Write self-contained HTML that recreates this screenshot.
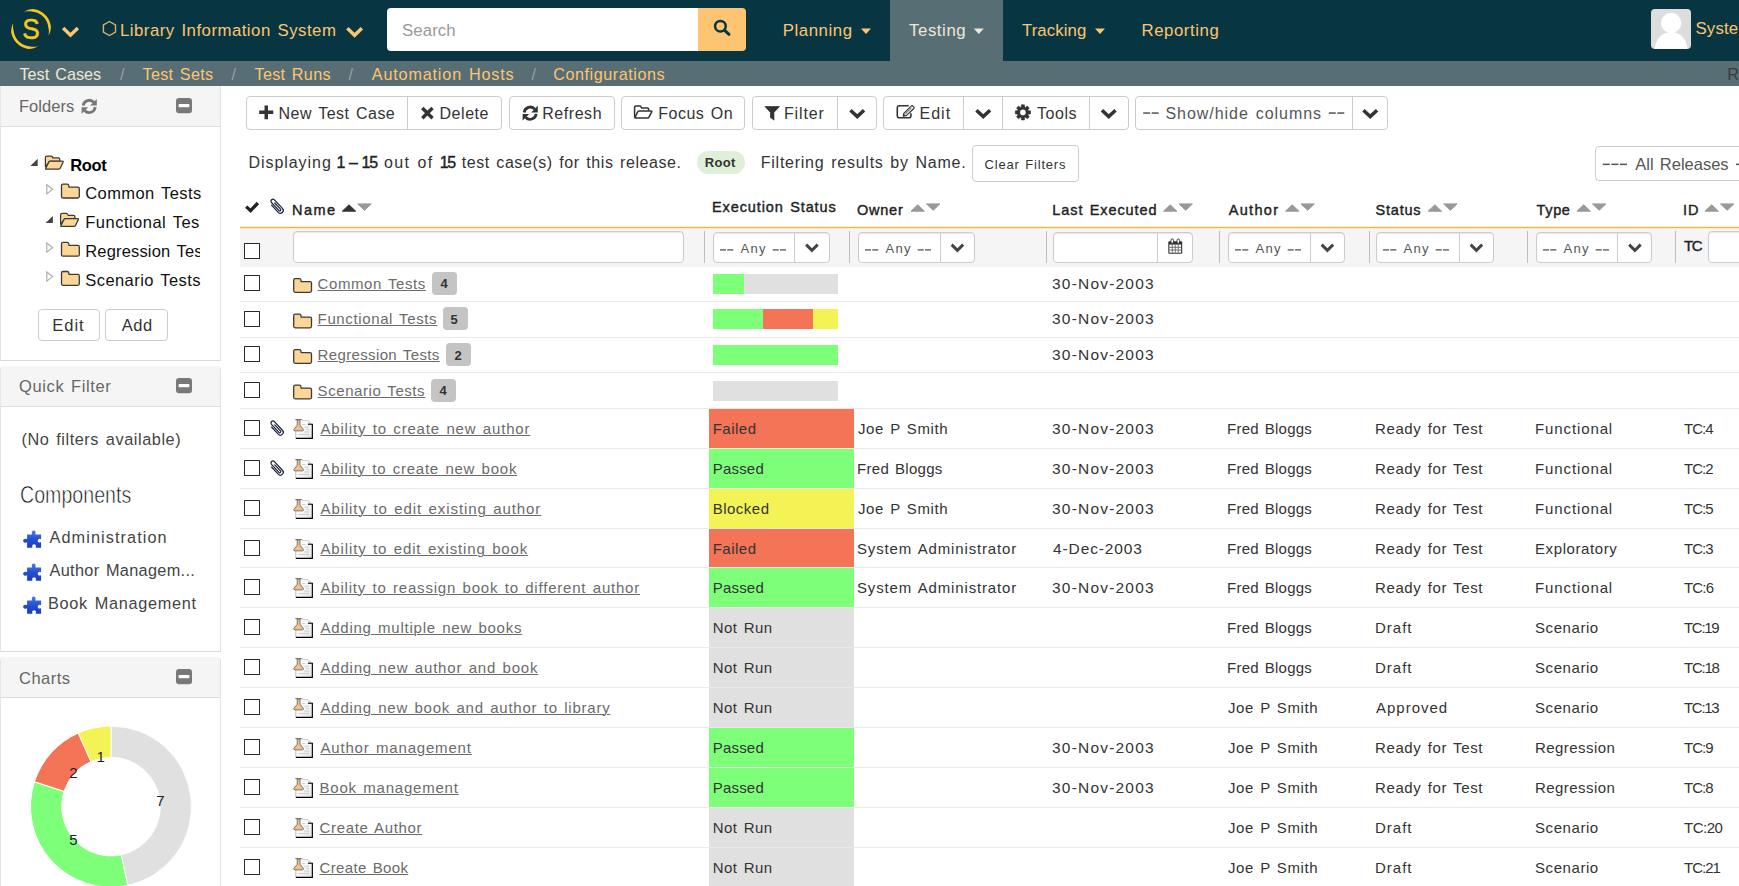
<!DOCTYPE html>
<html><head><meta charset="utf-8"><title>Test Cases</title>
<style>
html,body{margin:0;padding:0;background:#fff;}
body{width:1739px;height:886px;overflow:hidden;position:relative;font-family:"Liberation Sans",sans-serif;}
.t{position:absolute;white-space:pre;font-family:"Liberation Sans",sans-serif;line-height:30px;}
.b{position:absolute;box-sizing:border-box;}
.btn{position:absolute;box-sizing:border-box;border:1px solid #ccc;border-radius:4px;background:#fff;}
.inp{box-shadow:inset 0 1px 1px rgba(0,0,0,.09);}
.sep{position:absolute;width:1px;background:#ccc;}
.hl{position:absolute;left:240px;width:1499px;height:1px;background:#e9e9e9;}
.cb{position:absolute;box-sizing:border-box;width:16px;height:16px;left:244px;border:1px solid #2a2a2a;border-radius:0.5px;background:#fff;}
.vd{position:absolute;width:1px;top:231px;height:32px;background:#bdbdbd;}
svg{position:absolute;overflow:visible;}
</style></head><body>
<div class="b" style="left:0px;top:0px;width:1739px;height:61px;background:#073642;"></div>
<div class="b" style="left:890px;top:0px;width:113px;height:61px;background:#586e75;"></div>
<div class="b" style="left:0px;top:61px;width:1739px;height:25px;background:#586e75;"></div>
<div class="b" style="left:387px;top:8px;width:311px;height:43px;background:#fff;border-radius:4px 0 0 4px;"></div>
<div class="b" style="left:698px;top:8px;width:48px;height:43px;background:#fdc571;border-radius:0 4px 4px 0;"></div>
<div class="b" style="left:1651px;top:9px;width:40px;height:40px;background:#ddd;border-radius:4px;overflow:hidden;"></div>
<div class="b" style="left:0px;top:86px;width:221px;height:275px;background:#fff;border-left:1px solid #e6e6e6;border-right:1px solid #e2e2e2;border-bottom:1px solid #d9d9d9;"></div>
<div class="b" style="left:1px;top:86px;width:219px;height:41px;background:#f5f5f5;border-bottom:1px solid #ddd;"></div>
<div class="b" style="left:0px;top:366px;width:221px;height:286px;background:#fff;border-radius:4px 4px 0 0;border-left:1px solid #e6e6e6;border-right:1px solid #e2e2e2;border-bottom:1px solid #d9d9d9;"></div>
<div class="b" style="left:1px;top:366px;width:219px;height:41px;background:#f5f5f5;border-bottom:1px solid #ddd;border-radius:3px 3px 0 0;"></div>
<div class="b" style="left:0px;top:657px;width:221px;height:240px;background:#fff;border-radius:4px 4px 0 0;border-left:1px solid #e6e6e6;border-right:1px solid #e2e2e2;border-bottom:1px solid #d9d9d9;"></div>
<div class="b" style="left:1px;top:657px;width:219px;height:41px;background:#f5f5f5;border-bottom:1px solid #ddd;border-radius:3px 3px 0 0;"></div>
<div class="btn" style="left:37.5px;top:309px;width:62px;height:32px;"></div>
<div class="btn" style="left:105px;top:309px;width:62.5px;height:32px;"></div>
<div class="btn" style="left:246px;top:96px;width:256px;height:34px;"></div>
<div class="b" style="left:407px;top:97px;width:1px;height:32px;background:#ccc;"></div>
<div class="btn" style="left:509px;top:96px;width:106px;height:34px;"></div>
<div class="btn" style="left:621px;top:96px;width:124px;height:34px;"></div>
<div class="btn" style="left:752px;top:96px;width:125px;height:34px;"></div>
<div class="b" style="left:837px;top:97px;width:1px;height:32px;background:#ccc;"></div>
<div class="btn" style="left:883px;top:96px;width:246px;height:34px;"></div>
<div class="b" style="left:963px;top:97px;width:1px;height:32px;background:#ccc;"></div>
<div class="b" style="left:1002px;top:97px;width:1px;height:32px;background:#ccc;"></div>
<div class="b" style="left:1089px;top:97px;width:1px;height:32px;background:#ccc;"></div>
<div class="btn" style="left:1135px;top:96px;width:253px;height:34px;"></div>
<div class="b" style="left:1352px;top:97px;width:1px;height:32px;background:#ccc;"></div>
<div class="btn" style="left:972px;top:145px;width:107px;height:37px;"></div>
<div class="btn" style="left:1595px;top:146px;width:165px;height:35px;"></div>
<div class="b" style="left:697px;top:151px;width:48px;height:23px;background:#dff0d8;border-radius:12px;"></div>
<div class="b" style="left:240px;top:228px;width:1499px;height:39px;background:#f5f5f5;"></div>
<div class="cb" style="left:244px;top:243px;width:16px;height:16px;"></div>
<div class="btn inp" style="left:293px;top:231px;width:391px;height:32px;"></div>
<div class="vd" style="left:704px"></div>
<div class="vd" style="left:849px"></div>
<div class="vd" style="left:1045.5px"></div>
<div class="vd" style="left:1219px"></div>
<div class="vd" style="left:1368.5px"></div>
<div class="vd" style="left:1527px"></div>
<div class="vd" style="left:1675px"></div>
<div class="btn inp" style="left:713px;top:232px;width:116.5px;height:31px;"></div>
<div class="b" style="left:794px;top:233px;width:1px;height:29px;background:#ccc;"></div>
<div class="btn inp" style="left:858px;top:232px;width:116.5px;height:31px;"></div>
<div class="b" style="left:939.5px;top:233px;width:1px;height:29px;background:#ccc;"></div>
<div class="btn inp" style="left:1228px;top:232px;width:116.5px;height:31px;"></div>
<div class="b" style="left:1309.5px;top:233px;width:1px;height:29px;background:#ccc;"></div>
<div class="btn inp" style="left:1376px;top:232px;width:117.5px;height:31px;"></div>
<div class="b" style="left:1458.5px;top:233px;width:1px;height:29px;background:#ccc;"></div>
<div class="btn inp" style="left:1536px;top:232px;width:116px;height:31px;"></div>
<div class="b" style="left:1617px;top:233px;width:1px;height:29px;background:#ccc;"></div>
<div class="btn inp" style="left:1053px;top:232px;width:139.5px;height:31px;"></div>
<div class="b" style="left:1157px;top:233px;width:1px;height:29px;background:#ccc;"></div>
<div class="btn inp" style="left:1708px;top:231px;width:60px;height:32px;"></div>
<div class="hl" style="top:301px"></div>
<div class="hl" style="top:337px"></div>
<div class="hl" style="top:372px"></div>
<div class="hl" style="top:408px"></div>
<div class="cb" style="left:244px;top:275px;width:16px;height:16px;"></div>
<div class="b" style="left:432px;top:272px;width:25px;height:22.5px;background:#c4c4c4;border-radius:4px;"></div>
<div class="b" style="left:713px;top:274px;width:31px;height:20px;background:#7eff7a;"></div>
<div class="b" style="left:744px;top:274px;width:94px;height:20px;background:#e0e0e0;"></div>
<div class="cb" style="left:244px;top:311px;width:16px;height:16px;"></div>
<div class="b" style="left:443px;top:307px;width:25px;height:22.5px;background:#c4c4c4;border-radius:4px;"></div>
<div class="b" style="left:713px;top:309px;width:50px;height:20px;background:#7eff7a;"></div>
<div class="b" style="left:763px;top:309px;width:50px;height:20px;background:#f47457;"></div>
<div class="b" style="left:813px;top:309px;width:25px;height:20px;background:#f4f356;"></div>
<div class="cb" style="left:244px;top:346px;width:16px;height:16px;"></div>
<div class="b" style="left:446px;top:343px;width:25px;height:22.5px;background:#c4c4c4;border-radius:4px;"></div>
<div class="b" style="left:713px;top:345px;width:125px;height:20px;background:#7eff7a;"></div>
<div class="cb" style="left:244px;top:382px;width:16px;height:16px;"></div>
<div class="b" style="left:431px;top:379px;width:25px;height:22.5px;background:#c4c4c4;border-radius:4px;"></div>
<div class="b" style="left:713px;top:381px;width:125px;height:20px;background:#e0e0e0;"></div>
<div class="cb" style="left:244px;top:420px;width:16px;height:16px;"></div>
<div class="b" style="left:709px;top:409px;width:145px;height:39px;background:#f47457;"></div>
<div class="hl" style="top:448px"></div>
<div class="cb" style="left:244px;top:460px;width:16px;height:16px;"></div>
<div class="b" style="left:709px;top:449px;width:145px;height:39px;background:#7eff7a;"></div>
<div class="hl" style="top:488px"></div>
<div class="cb" style="left:244px;top:500px;width:16px;height:16px;"></div>
<div class="b" style="left:709px;top:489px;width:145px;height:39px;background:#f4f356;"></div>
<div class="hl" style="top:528px"></div>
<div class="cb" style="left:244px;top:540px;width:16px;height:16px;"></div>
<div class="b" style="left:709px;top:529px;width:145px;height:38px;background:#f47457;"></div>
<div class="hl" style="top:567px"></div>
<div class="cb" style="left:244px;top:579px;width:16px;height:16px;"></div>
<div class="b" style="left:709px;top:568px;width:145px;height:39px;background:#7eff7a;"></div>
<div class="hl" style="top:607px"></div>
<div class="cb" style="left:244px;top:619px;width:16px;height:16px;"></div>
<div class="b" style="left:709px;top:608px;width:145px;height:39px;background:#e0e0e0;"></div>
<div class="hl" style="top:647px"></div>
<div class="cb" style="left:244px;top:659px;width:16px;height:16px;"></div>
<div class="b" style="left:709px;top:648px;width:145px;height:39px;background:#e0e0e0;"></div>
<div class="hl" style="top:687px"></div>
<div class="cb" style="left:244px;top:699px;width:16px;height:16px;"></div>
<div class="b" style="left:709px;top:688px;width:145px;height:39px;background:#e0e0e0;"></div>
<div class="hl" style="top:727px"></div>
<div class="cb" style="left:244px;top:739px;width:16px;height:16px;"></div>
<div class="b" style="left:709px;top:728px;width:145px;height:39px;background:#7eff7a;"></div>
<div class="hl" style="top:767px"></div>
<div class="cb" style="left:244px;top:779px;width:16px;height:16px;"></div>
<div class="b" style="left:709px;top:768px;width:145px;height:39px;background:#7eff7a;"></div>
<div class="hl" style="top:807px"></div>
<div class="cb" style="left:244px;top:819px;width:16px;height:16px;"></div>
<div class="b" style="left:709px;top:808px;width:145px;height:39px;background:#e0e0e0;"></div>
<div class="hl" style="top:847px"></div>
<div class="cb" style="left:244px;top:859px;width:16px;height:16px;"></div>
<div class="b" style="left:709px;top:848px;width:145px;height:39px;background:#e0e0e0;"></div>
<svg width="1739" height="886" style="left:0;top:0"><path d="M24.57,11.33 L25.20,11.00 L25.85,10.69 L26.52,10.41 L27.20,10.16 L27.89,9.93 L28.60,9.72 L29.31,9.54 L30.04,9.39 L30.78,9.26 L31.52,9.16 L32.27,9.09 L33.03,9.05 L33.77,9.14 L34.52,9.26 L35.25,9.41 L35.99,9.58 L36.71,9.78 L37.43,10.01 L38.14,10.26 L38.83,10.54 L39.52,10.85 L40.20,11.18 L40.86,11.54 L41.51,11.92 L42.14,12.33 L42.76,12.76 L43.36,13.21 L43.94,13.69 L44.51,14.18 L45.05,14.70 L45.58,15.24 L46.09,15.79 L46.57,16.37 L47.03,16.96 L47.47,17.57 L47.89,18.20 L48.28,18.84 L48.65,19.49 L49.00,20.16 L49.32,20.84 L49.61,21.54 L49.88,22.24 L50.12,22.95 L50.33,23.68 L50.52,24.40 L50.67,25.14 L50.81,25.88 L50.91,26.63 L50.88,27.38 L50.83,28.13 L50.74,28.88 L50.63,29.62 L50.49,30.35 L50.32,31.06 L50.13,31.77 L49.91,32.47 L49.66,33.15 L49.39,33.83 L49.10,34.48 L48.78,35.12 L48.58,35.05 L48.69,34.36 L48.78,33.67 L48.84,32.97 L48.88,32.28 L48.89,31.59 L48.87,30.91 L48.82,30.23 L48.75,29.56 L48.66,28.89 L48.54,28.23 L48.39,27.59 L48.23,26.95 L48.14,26.30 L48.03,25.66 L47.89,25.02 L47.73,24.39 L47.54,23.77 L47.33,23.15 L47.10,22.54 L46.85,21.94 L46.57,21.35 L46.28,20.77 L45.96,20.21 L45.62,19.65 L45.26,19.11 L44.87,18.58 L44.47,18.07 L44.05,17.57 L43.62,17.09 L43.16,16.63 L42.69,16.18 L42.20,15.75 L41.69,15.34 L41.17,14.95 L40.64,14.57 L40.09,14.22 L39.53,13.89 L38.96,13.58 L38.37,13.29 L37.78,13.03 L37.18,12.79 L36.56,12.57 L35.94,12.37 L35.31,12.20 L34.68,12.05 L34.04,11.92 L33.40,11.82 L32.75,11.74 L32.11,11.58 L31.46,11.45 L30.80,11.34 L30.13,11.26 L29.46,11.20 L28.78,11.17 L28.09,11.16 L27.41,11.18 L26.72,11.23 L26.03,11.30 L25.33,11.40 L24.64,11.53Z" fill="#f9c81f"/>
<path d="M37.43,46.67 L36.81,47.00 L36.17,47.30 L35.51,47.57 L34.84,47.83 L34.16,48.06 L33.47,48.26 L32.76,48.44 L32.05,48.60 L31.33,48.72 L30.60,48.82 L29.86,48.90 L29.11,48.94 L28.38,48.88 L27.64,48.77 L26.92,48.63 L26.19,48.47 L25.48,48.27 L24.77,48.06 L24.07,47.81 L23.38,47.55 L22.70,47.25 L22.03,46.93 L21.38,46.59 L20.73,46.22 L20.10,45.83 L19.49,45.42 L18.89,44.98 L18.31,44.52 L17.75,44.04 L17.20,43.54 L16.67,43.02 L16.16,42.49 L15.67,41.93 L15.21,41.35 L14.76,40.76 L14.34,40.15 L13.94,39.53 L13.56,38.89 L13.21,38.24 L12.88,37.58 L12.57,36.90 L12.29,36.22 L12.04,35.52 L11.81,34.82 L11.61,34.10 L11.44,33.39 L11.29,32.66 L11.18,31.93 L11.19,31.18 L11.22,30.44 L11.29,29.71 L11.38,28.98 L11.49,28.26 L11.63,27.54 L11.80,26.84 L12.00,26.15 L12.22,25.47 L12.46,24.80 L12.72,24.14 L13.01,23.50 L13.22,23.56 L13.13,24.25 L13.07,24.94 L13.03,25.62 L13.02,26.30 L13.03,26.98 L13.07,27.65 L13.14,28.32 L13.22,28.98 L13.34,29.63 L13.47,30.28 L13.64,30.91 L13.82,31.54 L13.94,32.17 L14.07,32.79 L14.22,33.42 L14.40,34.03 L14.59,34.64 L14.81,35.25 L15.05,35.84 L15.32,36.42 L15.60,37.00 L15.91,37.56 L16.24,38.11 L16.58,38.65 L16.95,39.18 L17.33,39.69 L17.74,40.19 L18.16,40.67 L18.60,41.14 L19.06,41.59 L19.53,42.02 L20.02,42.43 L20.52,42.83 L21.04,43.21 L21.57,43.56 L22.12,43.90 L22.67,44.22 L23.24,44.52 L23.82,44.79 L24.41,45.05 L25.00,45.28 L25.61,45.49 L26.22,45.68 L26.84,45.84 L27.47,45.99 L28.10,46.11 L28.73,46.20 L29.37,46.29 L30.00,46.44 L30.64,46.57 L31.29,46.67 L31.95,46.75 L32.62,46.80 L33.28,46.83 L33.96,46.84 L34.64,46.82 L35.32,46.77 L36.00,46.70 L36.68,46.60 L37.36,46.47Z" fill="#f9c81f"/>
<text x="31.1" y="39.2" text-anchor="middle" font-family="Liberation Sans" font-size="29.5" fill="#f9c81f" stroke="#f9c81f" stroke-width="0.45" textLength="17.5" lengthAdjust="spacingAndGlyphs">S</text>
<polyline points="63.14,27.94 70.50,35.13 77.86,27.94" fill="none" stroke="#fdc571" stroke-width="3.5" stroke-linejoin="miter"/>
<polyline points="347.34,28.34 354.60,35.33 361.86,28.34" fill="none" stroke="#fdc571" stroke-width="3.5" stroke-linejoin="miter"/>
<polygon points="109.45,21.50 115.51,25.00 115.51,32.00 109.45,35.50 103.39,32.00 103.39,25.00" fill="none" stroke="#d9ae68" stroke-width="1.4"/>
<circle cx="720.4" cy="26.2" r="5.3" fill="none" stroke="#073642" stroke-width="2.5"/><line x1="724.4" y1="30.2" x2="729" y2="34.3" stroke="#073642" stroke-width="3" stroke-linecap="round"/>
<polygon points="861,28.5 871,28.5 866.0,34.0" fill="#fdc571"/>
<polygon points="973.75,28.5 983.75,28.5 978.75,34.0" fill="#eee8d5"/>
<polygon points="1095,28.5 1105,28.5 1100.0,34.0" fill="#fdc571"/>
<g transform="translate(1651,9)"><clipPath id="av"><rect width="40" height="40" rx="4"/></clipPath><g clip-path="url(#av)"><circle cx="20.1" cy="13.9" r="10.2" fill="#fff"/><ellipse cx="20.1" cy="40.4" rx="16.3" ry="17.4" fill="#fff"/></g></g>
<g transform="translate(81.2,98.4) scale(1.0)" stroke="#777" fill="#777"><path d="M2,7.3 A6.1,6.1 0 0 1 12.6,3.9" fill="none" stroke-width="2.8"/><polygon points="15.6,0.6 15.6,7.2 9,7.2" stroke="none"/><path d="M14,8.7 A6.1,6.1 0 0 1 3.4,12.1" fill="none" stroke-width="2.8"/><polygon points="0.4,15.4 0.4,8.8 7,8.8" stroke="none"/></g>
<g transform="translate(522.2,105.2) scale(1.0)" stroke="#333" fill="#333"><path d="M2,7.3 A6.1,6.1 0 0 1 12.6,3.9" fill="none" stroke-width="2.8"/><polygon points="15.6,0.6 15.6,7.2 9,7.2" stroke="none"/><path d="M14,8.7 A6.1,6.1 0 0 1 3.4,12.1" fill="none" stroke-width="2.8"/><polygon points="0.4,15.4 0.4,8.8 7,8.8" stroke="none"/></g>
<rect x="176" y="98" width="16" height="15.3" rx="3" fill="#797979"/><rect x="178.6" y="104.1" width="10.8" height="3.2" rx="0.7" fill="#fff"/>
<rect x="176" y="378" width="16" height="15.3" rx="3" fill="#797979"/><rect x="178.6" y="384.1" width="10.8" height="3.2" rx="0.7" fill="#fff"/>
<rect x="176" y="669" width="16" height="15.3" rx="3" fill="#797979"/><rect x="178.6" y="675.1" width="10.8" height="3.2" rx="0.7" fill="#fff"/>
<path d="M264.5,105.4h3.5v5.2h5.3v3.5h-5.3v5.2h-3.5v-5.2h-5.3v-3.5h5.3z" fill="#333"/>
<g stroke="#333" stroke-width="3.4"><line x1="422.3" y1="108" x2="432.5" y2="118.2"/><line x1="432.5" y1="108" x2="422.3" y2="118.2"/></g>
<g transform="translate(633.6,105) scale(1.0)" stroke="#333"><path d="M1,12.2 V2.2 Q1,1 2.2,1 H6.2 Q7.2,1 7.6,2 L8,2.9 H13.8 Q15,2.9 15,4.1 V5.8" fill="none" stroke-width="1.5"/><path d="M1.2,12.6 L4.3,6.6 Q4.7,5.9 5.6,5.9 H17.6 Q18.6,5.9 18.1,6.8 L15.4,12.1 Q15,13 14,13 H2 Q1,13 1.2,12.6 Z" fill="none" stroke-width="1.5" stroke-linejoin="round"/></g>
<path d="M765,106.6h14.4l-5.5,5.9v7.6l-3.4,-2.6v-5z" fill="#333" stroke="#333" stroke-width="0.8" stroke-linejoin="round"/>
<g transform="translate(896.5,105.2)" stroke="#333" fill="none"><path d="M14.4,8.6 V10.6 Q14.4,12.6 12.4,12.6 H2.8 Q0.8,12.6 0.8,10.6 V2.6 Q0.8,0.6 2.8,0.6 H11.6" stroke-width="1.6" stroke-linecap="round"/><path d="M6.7,10.9 L7.3,8.1 L14.9,0.7 Q15.6,0.1 16.3,0.8 L17.4,1.9 Q18,2.6 17.4,3.3 L9.8,10.4 Z" fill="#fff" stroke-width="1.15" stroke-linejoin="round"/><path d="M6.7,10.9 L7.2,8.6 L9.2,10.4 Z" fill="#333" stroke="none"/><line x1="8.6" y1="8.9" x2="15" y2="2.8" stroke-width="0.9"/></g>
<polygon points="1030.45,110.87 1030.45,113.93 1028.25,114.05 1027.85,115.01 1029.32,116.65 1027.15,118.82 1025.51,117.35 1024.55,117.75 1024.43,119.95 1021.37,119.95 1021.25,117.75 1020.29,117.35 1018.65,118.82 1016.48,116.65 1017.95,115.01 1017.55,114.05 1015.35,113.93 1015.35,110.87 1017.55,110.75 1017.95,109.79 1016.48,108.15 1018.65,105.98 1020.29,107.45 1021.25,107.05 1021.37,104.85 1024.43,104.85 1024.55,107.05 1025.51,107.45 1027.15,105.98 1029.32,108.15 1027.85,109.79 1028.25,110.75" fill="#333" stroke="#333" stroke-width="0.6" stroke-linejoin="round"/><circle cx="1022.9" cy="112.4" r="2.8" fill="#fff"/>
<polyline points="850.44,110.24 857.25,116.63 864.06,110.24" fill="none" stroke="#333" stroke-width="3.5" stroke-linejoin="miter"/>
<polyline points="976.44,110.24 983.25,116.63 990.06,110.24" fill="none" stroke="#333" stroke-width="3.5" stroke-linejoin="miter"/>
<polyline points="1101.94,110.24 1108.75,116.63 1115.56,110.24" fill="none" stroke="#333" stroke-width="3.5" stroke-linejoin="miter"/>
<polyline points="1363.44,110.24 1370.25,116.63 1377.06,110.24" fill="none" stroke="#333" stroke-width="3.5" stroke-linejoin="miter"/>
<polygon points="37.7,158.8 37.7,166.0 30.3,166.0" fill="#444"/>
<path d="M45.400000000000006,166.8 V157.5 Q45.400000000000006,156.0 46.900000000000006,156.0 H50.900000000000006 Q51.900000000000006,156.0 52.400000000000006,156.9 L52.900000000000006,157.9 H58.300000000000004 Q59.7,157.9 59.7,159.3 V161.3 H49.7 Z" fill="#fdd595" stroke="#3a3a3a" stroke-width="1.25" stroke-linejoin="round"/><path d="M45.6,168.5 L48.900000000000006,161.9 Q49.300000000000004,161.20000000000002 50.1,161.20000000000002 H62.5 Q63.6,161.20000000000002 63.1,162.20000000000002 L60.300000000000004,168.0 Q59.900000000000006,169.0 58.900000000000006,169.0 H46.300000000000004 Q45.300000000000004,169.0 45.6,168.5 Z" fill="#fdd595" stroke="#3a3a3a" stroke-width="1.25" stroke-linejoin="round"/>
<polygon points="46.800000000000004,184.70000000000002 52.6,189.3 46.800000000000004,193.9" fill="#fff" stroke="#aaa" stroke-width="1.1" stroke-linejoin="miter"/>
<path d="M61.5,185.7 Q61.5,184.2 63.0,184.2 H67.39999999999999 Q68.5,184.2 68.7,185.3 L69.0,187.1 H77.8 Q79.3,187.1 79.3,188.6 V196.5 Q79.3,198.0 77.8,198.0 H63.0 Q61.5,198.0 61.5,196.5 Z" fill="#fdd595" stroke="#3a3a3a" stroke-width="1.3" stroke-linejoin="round"/>
<polygon points="52.9,215.9 52.9,223.1 45.5,223.1" fill="#444"/>
<path d="M60.6,224.2 V214.89999999999998 Q60.6,213.39999999999998 62.1,213.39999999999998 H66.1 Q67.1,213.39999999999998 67.6,214.29999999999998 L68.1,215.29999999999998 H73.5 Q74.9,215.29999999999998 74.9,216.7 V218.7 H64.9 Z" fill="#fdd595" stroke="#3a3a3a" stroke-width="1.25" stroke-linejoin="round"/><path d="M60.8,225.89999999999998 L64.1,219.29999999999998 Q64.5,218.6 65.3,218.6 H77.7 Q78.8,218.6 78.3,219.6 L75.5,225.39999999999998 Q75.1,226.39999999999998 74.1,226.39999999999998 H61.5 Q60.5,226.39999999999998 60.8,225.89999999999998 Z" fill="#fdd595" stroke="#3a3a3a" stroke-width="1.25" stroke-linejoin="round"/>
<polygon points="46.800000000000004,242.9 52.6,247.5 46.800000000000004,252.1" fill="#fff" stroke="#aaa" stroke-width="1.1" stroke-linejoin="miter"/>
<path d="M61.5,243.89999999999998 Q61.5,242.39999999999998 63.0,242.39999999999998 H67.39999999999999 Q68.5,242.39999999999998 68.7,243.5 L69.0,245.29999999999998 H77.8 Q79.3,245.29999999999998 79.3,246.79999999999998 V254.7 Q79.3,256.2 77.8,256.2 H63.0 Q61.5,256.2 61.5,254.7 Z" fill="#fdd595" stroke="#3a3a3a" stroke-width="1.3" stroke-linejoin="round"/>
<polygon points="46.800000000000004,272.0 52.6,276.59999999999997 46.800000000000004,281.2" fill="#fff" stroke="#aaa" stroke-width="1.1" stroke-linejoin="miter"/>
<path d="M61.5,273.0 Q61.5,271.5 63.0,271.5 H67.39999999999999 Q68.5,271.5 68.7,272.6 L69.0,274.40000000000003 H77.8 Q79.3,274.40000000000003 79.3,275.90000000000003 V283.8 Q79.3,285.3 77.8,285.3 H63.0 Q61.5,285.3 61.5,283.8 Z" fill="#fdd595" stroke="#3a3a3a" stroke-width="1.3" stroke-linejoin="round"/>
<path d="M293.7,280.2 Q293.7,278.7 295.2,278.7 H299.6 Q300.7,278.7 300.9,279.8 L301.2,281.6 H310.0 Q311.5,281.6 311.5,283.1 V290.8 Q311.5,292.3 310.0,292.3 H295.2 Q293.7,292.3 293.7,290.8 Z" fill="#fdd595" stroke="#3a3a3a" stroke-width="1.3" stroke-linejoin="round"/>
<path d="M293.7,315.7 Q293.7,314.2 295.2,314.2 H299.6 Q300.7,314.2 300.9,315.3 L301.2,317.1 H310.0 Q311.5,317.1 311.5,318.6 V326.3 Q311.5,327.8 310.0,327.8 H295.2 Q293.7,327.8 293.7,326.3 Z" fill="#fdd595" stroke="#3a3a3a" stroke-width="1.3" stroke-linejoin="round"/>
<path d="M293.7,351.2 Q293.7,349.7 295.2,349.7 H299.6 Q300.7,349.7 300.9,350.8 L301.2,352.6 H310.0 Q311.5,352.6 311.5,354.1 V361.8 Q311.5,363.3 310.0,363.3 H295.2 Q293.7,363.3 293.7,361.8 Z" fill="#fdd595" stroke="#3a3a3a" stroke-width="1.3" stroke-linejoin="round"/>
<path d="M293.7,386.7 Q293.7,385.2 295.2,385.2 H299.6 Q300.7,385.2 300.9,386.3 L301.2,388.1 H310.0 Q311.5,388.1 311.5,389.6 V397.3 Q311.5,398.8 310.0,398.8 H295.2 Q293.7,398.8 293.7,397.3 Z" fill="#fdd595" stroke="#3a3a3a" stroke-width="1.3" stroke-linejoin="round"/>
<polyline points="246.2,206.6 250.6,210.6 257.9,203" fill="none" stroke="#222" stroke-width="3.3"/>
<g transform="translate(270,199.4) scale(1)" ><g transform="rotate(-43 6.8 7.2)"><path d="M3.9,2.6 V12.4 A2.9,2.9 0 0 0 9.7,12.4 V0.6 A2,2 0 0 0 5.7,0.6 V11.6 A1.05,1.05 0 0 0 7.8,11.6 V3.2" fill="none" stroke="#1a2038" stroke-width="1.2" stroke-linecap="round"/></g></g>
<polygon points="342.3,211.20000000000002 349.0,204.8 355.7,211.20000000000002" fill="#333" stroke="#333" stroke-width="1" stroke-linejoin="round"/>
<polygon points="357.8,203.9 371.2,203.9 364.5,210.3" fill="#999" stroke="#999" stroke-width="1" stroke-linejoin="round"/>
<polygon points="911.0,211.20000000000002 917.7,204.8 924.4,211.20000000000002" fill="#999" stroke="#999" stroke-width="1" stroke-linejoin="round"/>
<polygon points="926.5,203.9 939.9,203.9 933.2,210.3" fill="#999" stroke="#999" stroke-width="1" stroke-linejoin="round"/>
<polygon points="1163.5,211.20000000000002 1170.2,204.8 1176.9,211.20000000000002" fill="#999" stroke="#999" stroke-width="1" stroke-linejoin="round"/>
<polygon points="1179,203.9 1192.4,203.9 1185.7,210.3" fill="#999" stroke="#999" stroke-width="1" stroke-linejoin="round"/>
<polygon points="1285.5,211.20000000000002 1292.2,204.8 1298.9,211.20000000000002" fill="#999" stroke="#999" stroke-width="1" stroke-linejoin="round"/>
<polygon points="1301,203.9 1314.4,203.9 1307.7,210.3" fill="#999" stroke="#999" stroke-width="1" stroke-linejoin="round"/>
<polygon points="1428.2,211.20000000000002 1434.9,204.8 1441.6000000000001,211.20000000000002" fill="#999" stroke="#999" stroke-width="1" stroke-linejoin="round"/>
<polygon points="1443.7,203.9 1457.1000000000001,203.9 1450.4,210.3" fill="#999" stroke="#999" stroke-width="1" stroke-linejoin="round"/>
<polygon points="1577.0,211.20000000000002 1583.7,204.8 1590.4,211.20000000000002" fill="#999" stroke="#999" stroke-width="1" stroke-linejoin="round"/>
<polygon points="1592.5,203.9 1605.9,203.9 1599.2,210.3" fill="#999" stroke="#999" stroke-width="1" stroke-linejoin="round"/>
<polygon points="1705.0,211.20000000000002 1711.7,204.8 1718.4,211.20000000000002" fill="#999" stroke="#999" stroke-width="1" stroke-linejoin="round"/>
<polygon points="1720.5,203.9 1733.9,203.9 1727.2,210.3" fill="#999" stroke="#999" stroke-width="1" stroke-linejoin="round"/>
<polyline points="806.13,244.63 811.90,250.35 817.67,244.63" fill="none" stroke="#444" stroke-width="2.9" stroke-linejoin="miter"/>
<polyline points="951.63,244.63 957.40,250.35 963.17,244.63" fill="none" stroke="#444" stroke-width="2.9" stroke-linejoin="miter"/>
<polyline points="1321.63,244.63 1327.40,250.35 1333.17,244.63" fill="none" stroke="#444" stroke-width="2.9" stroke-linejoin="miter"/>
<polyline points="1470.63,244.63 1476.40,250.35 1482.17,244.63" fill="none" stroke="#444" stroke-width="2.9" stroke-linejoin="miter"/>
<polyline points="1629.13,244.63 1634.90,250.35 1640.67,244.63" fill="none" stroke="#444" stroke-width="2.9" stroke-linejoin="miter"/>
<g transform="translate(1168,239) scale(1)" ><rect x="0.3" y="2.2" width="13.9" height="12.6" rx="1" fill="#333"/><rect x="1.4" y="5.6" width="11.7" height="8.1" fill="#fff"/><g stroke="#555" stroke-width="0.8"><line x1="4.3" y1="5.6" x2="4.3" y2="13.7"/><line x1="7.25" y1="5.6" x2="7.25" y2="13.7"/><line x1="10.2" y1="5.6" x2="10.2" y2="13.7"/><line x1="1.4" y1="8.3" x2="13.1" y2="8.3"/><line x1="1.4" y1="11" x2="13.1" y2="11"/></g><rect x="2.9" y="0" width="2.6" height="4.3" rx="1.2" fill="#fff" stroke="#333" stroke-width="0.9"/><rect x="9" y="0" width="2.6" height="4.3" rx="1.2" fill="#fff" stroke="#333" stroke-width="0.9"/></g>
<defs><linearGradient id="pz" x1="0" y1="0" x2="0" y2="1"><stop offset="0" stop-color="#4f7fe6"/><stop offset="0.5" stop-color="#2450d2"/><stop offset="1" stop-color="#1a3cc0"/></linearGradient></defs>
<g transform="translate(23.1,530.4) scale(1)" ><path d="M4,4.2 H8.4 Q9.2,4.2 8.9,3.4 Q8.4,2.2 8.9,1.2 Q9.5,0 10.6,0 Q11.7,0 12.3,1.2 Q12.8,2.2 12.3,3.4 Q12,4.2 12.8,4.2 H18 V8.2 Q18,9 17.3,8.7 Q16.2,8.2 15.4,8.8 Q14.6,9.4 14.6,10.3 Q14.6,11.2 15.4,11.8 Q16.2,12.4 17.3,11.9 Q18,11.6 18,12.4 V17.3 H13.2 Q12.4,17.3 12.7,16.5 Q13.2,15.4 12.6,14.6 Q12,13.8 11,13.8 Q10,13.8 9.4,14.6 Q8.8,15.4 9.3,16.5 Q9.6,17.3 8.8,17.3 H4 V12.5 Q4,11.7 3.3,12 Q2.2,12.5 1.2,12 Q0,11.4 0,10.3 Q0,9.2 1.2,8.6 Q2.2,8.1 3.3,8.6 Q4,8.9 4,8.1 Z" fill="url(#pz)"/></g>
<g transform="translate(23.1,563.4) scale(1)" ><path d="M4,4.2 H8.4 Q9.2,4.2 8.9,3.4 Q8.4,2.2 8.9,1.2 Q9.5,0 10.6,0 Q11.7,0 12.3,1.2 Q12.8,2.2 12.3,3.4 Q12,4.2 12.8,4.2 H18 V8.2 Q18,9 17.3,8.7 Q16.2,8.2 15.4,8.8 Q14.6,9.4 14.6,10.3 Q14.6,11.2 15.4,11.8 Q16.2,12.4 17.3,11.9 Q18,11.6 18,12.4 V17.3 H13.2 Q12.4,17.3 12.7,16.5 Q13.2,15.4 12.6,14.6 Q12,13.8 11,13.8 Q10,13.8 9.4,14.6 Q8.8,15.4 9.3,16.5 Q9.6,17.3 8.8,17.3 H4 V12.5 Q4,11.7 3.3,12 Q2.2,12.5 1.2,12 Q0,11.4 0,10.3 Q0,9.2 1.2,8.6 Q2.2,8.1 3.3,8.6 Q4,8.9 4,8.1 Z" fill="url(#pz)"/></g>
<g transform="translate(23.1,596.4) scale(1)" ><path d="M4,4.2 H8.4 Q9.2,4.2 8.9,3.4 Q8.4,2.2 8.9,1.2 Q9.5,0 10.6,0 Q11.7,0 12.3,1.2 Q12.8,2.2 12.3,3.4 Q12,4.2 12.8,4.2 H18 V8.2 Q18,9 17.3,8.7 Q16.2,8.2 15.4,8.8 Q14.6,9.4 14.6,10.3 Q14.6,11.2 15.4,11.8 Q16.2,12.4 17.3,11.9 Q18,11.6 18,12.4 V17.3 H13.2 Q12.4,17.3 12.7,16.5 Q13.2,15.4 12.6,14.6 Q12,13.8 11,13.8 Q10,13.8 9.4,14.6 Q8.8,15.4 9.3,16.5 Q9.6,17.3 8.8,17.3 H4 V12.5 Q4,11.7 3.3,12 Q2.2,12.5 1.2,12 Q0,11.4 0,10.3 Q0,9.2 1.2,8.6 Q2.2,8.1 3.3,8.6 Q4,8.9 4,8.1 Z" fill="url(#pz)"/></g>
<defs><linearGradient id="dg" x1="0" y1="0" x2="1" y2="1"><stop offset="0" stop-color="#ffffff"/><stop offset="0.45" stop-color="#fbfbfb"/><stop offset="1" stop-color="#e2e2e2"/></linearGradient></defs>
<g transform="translate(293,418.9) scale(1)" ><path d="M2.3,1.3 H15.4 L19.4,5.1 V19.5 H2.3 Z" fill="url(#dg)"/><path d="M2.75,12 V19.4" stroke="#c4c4c4" stroke-width="1.1" fill="none"/><path d="M9,1.75 H15.3" stroke="#c8c8c8" stroke-width="0.9" fill="none"/><path d="M15.3,1.4 L19.3,5.2 H15.3 Z" fill="#d2d2d2"/><path d="M14.9,5.3 H19.35 V19.45 H2.9" fill="none" stroke="#000" stroke-width="1.15"/><g stroke="#c3c3c3" stroke-width="0.8"><line x1="9" y1="5.7" x2="12.5" y2="5.7"/><line x1="11.2" y1="8.3" x2="15.9" y2="8.3"/><line x1="13" y1="10.7" x2="15.9" y2="10.7"/><line x1="11.2" y1="13.1" x2="15.9" y2="13.1"/><line x1="5.3" y1="15.7" x2="15.9" y2="15.7"/></g><path d="M4.25,1 H6.95 V6.3 L10.3,10.4 Q10.9,11.9 9.3,11.95 H1.9 Q0.3,11.9 0.9,10.4 L4.25,6.3 Z" fill="#f0c27f" stroke="#747474" stroke-width="1" stroke-linejoin="round"/><rect x="2.3" y="0" width="6.6" height="1.25" rx="0.5" fill="#777"/></g>
<g transform="translate(270,421.2) scale(1)" ><g transform="rotate(-43 6.8 7.2)"><path d="M3.9,2.6 V12.4 A2.9,2.9 0 0 0 9.7,12.4 V0.6 A2,2 0 0 0 5.7,0.6 V11.6 A1.05,1.05 0 0 0 7.8,11.6 V3.2" fill="none" stroke="#1a2038" stroke-width="1.2" stroke-linecap="round"/></g></g>
<g transform="translate(293,458.9) scale(1)" ><path d="M2.3,1.3 H15.4 L19.4,5.1 V19.5 H2.3 Z" fill="url(#dg)"/><path d="M2.75,12 V19.4" stroke="#c4c4c4" stroke-width="1.1" fill="none"/><path d="M9,1.75 H15.3" stroke="#c8c8c8" stroke-width="0.9" fill="none"/><path d="M15.3,1.4 L19.3,5.2 H15.3 Z" fill="#d2d2d2"/><path d="M14.9,5.3 H19.35 V19.45 H2.9" fill="none" stroke="#000" stroke-width="1.15"/><g stroke="#c3c3c3" stroke-width="0.8"><line x1="9" y1="5.7" x2="12.5" y2="5.7"/><line x1="11.2" y1="8.3" x2="15.9" y2="8.3"/><line x1="13" y1="10.7" x2="15.9" y2="10.7"/><line x1="11.2" y1="13.1" x2="15.9" y2="13.1"/><line x1="5.3" y1="15.7" x2="15.9" y2="15.7"/></g><path d="M4.25,1 H6.95 V6.3 L10.3,10.4 Q10.9,11.9 9.3,11.95 H1.9 Q0.3,11.9 0.9,10.4 L4.25,6.3 Z" fill="#f0c27f" stroke="#747474" stroke-width="1" stroke-linejoin="round"/><rect x="2.3" y="0" width="6.6" height="1.25" rx="0.5" fill="#777"/></g>
<g transform="translate(270,461.2) scale(1)" ><g transform="rotate(-43 6.8 7.2)"><path d="M3.9,2.6 V12.4 A2.9,2.9 0 0 0 9.7,12.4 V0.6 A2,2 0 0 0 5.7,0.6 V11.6 A1.05,1.05 0 0 0 7.8,11.6 V3.2" fill="none" stroke="#1a2038" stroke-width="1.2" stroke-linecap="round"/></g></g>
<g transform="translate(293,498.9) scale(1)" ><path d="M2.3,1.3 H15.4 L19.4,5.1 V19.5 H2.3 Z" fill="url(#dg)"/><path d="M2.75,12 V19.4" stroke="#c4c4c4" stroke-width="1.1" fill="none"/><path d="M9,1.75 H15.3" stroke="#c8c8c8" stroke-width="0.9" fill="none"/><path d="M15.3,1.4 L19.3,5.2 H15.3 Z" fill="#d2d2d2"/><path d="M14.9,5.3 H19.35 V19.45 H2.9" fill="none" stroke="#000" stroke-width="1.15"/><g stroke="#c3c3c3" stroke-width="0.8"><line x1="9" y1="5.7" x2="12.5" y2="5.7"/><line x1="11.2" y1="8.3" x2="15.9" y2="8.3"/><line x1="13" y1="10.7" x2="15.9" y2="10.7"/><line x1="11.2" y1="13.1" x2="15.9" y2="13.1"/><line x1="5.3" y1="15.7" x2="15.9" y2="15.7"/></g><path d="M4.25,1 H6.95 V6.3 L10.3,10.4 Q10.9,11.9 9.3,11.95 H1.9 Q0.3,11.9 0.9,10.4 L4.25,6.3 Z" fill="#f0c27f" stroke="#747474" stroke-width="1" stroke-linejoin="round"/><rect x="2.3" y="0" width="6.6" height="1.25" rx="0.5" fill="#777"/></g>
<g transform="translate(293,538.9) scale(1)" ><path d="M2.3,1.3 H15.4 L19.4,5.1 V19.5 H2.3 Z" fill="url(#dg)"/><path d="M2.75,12 V19.4" stroke="#c4c4c4" stroke-width="1.1" fill="none"/><path d="M9,1.75 H15.3" stroke="#c8c8c8" stroke-width="0.9" fill="none"/><path d="M15.3,1.4 L19.3,5.2 H15.3 Z" fill="#d2d2d2"/><path d="M14.9,5.3 H19.35 V19.45 H2.9" fill="none" stroke="#000" stroke-width="1.15"/><g stroke="#c3c3c3" stroke-width="0.8"><line x1="9" y1="5.7" x2="12.5" y2="5.7"/><line x1="11.2" y1="8.3" x2="15.9" y2="8.3"/><line x1="13" y1="10.7" x2="15.9" y2="10.7"/><line x1="11.2" y1="13.1" x2="15.9" y2="13.1"/><line x1="5.3" y1="15.7" x2="15.9" y2="15.7"/></g><path d="M4.25,1 H6.95 V6.3 L10.3,10.4 Q10.9,11.9 9.3,11.95 H1.9 Q0.3,11.9 0.9,10.4 L4.25,6.3 Z" fill="#f0c27f" stroke="#747474" stroke-width="1" stroke-linejoin="round"/><rect x="2.3" y="0" width="6.6" height="1.25" rx="0.5" fill="#777"/></g>
<g transform="translate(293,577.9) scale(1)" ><path d="M2.3,1.3 H15.4 L19.4,5.1 V19.5 H2.3 Z" fill="url(#dg)"/><path d="M2.75,12 V19.4" stroke="#c4c4c4" stroke-width="1.1" fill="none"/><path d="M9,1.75 H15.3" stroke="#c8c8c8" stroke-width="0.9" fill="none"/><path d="M15.3,1.4 L19.3,5.2 H15.3 Z" fill="#d2d2d2"/><path d="M14.9,5.3 H19.35 V19.45 H2.9" fill="none" stroke="#000" stroke-width="1.15"/><g stroke="#c3c3c3" stroke-width="0.8"><line x1="9" y1="5.7" x2="12.5" y2="5.7"/><line x1="11.2" y1="8.3" x2="15.9" y2="8.3"/><line x1="13" y1="10.7" x2="15.9" y2="10.7"/><line x1="11.2" y1="13.1" x2="15.9" y2="13.1"/><line x1="5.3" y1="15.7" x2="15.9" y2="15.7"/></g><path d="M4.25,1 H6.95 V6.3 L10.3,10.4 Q10.9,11.9 9.3,11.95 H1.9 Q0.3,11.9 0.9,10.4 L4.25,6.3 Z" fill="#f0c27f" stroke="#747474" stroke-width="1" stroke-linejoin="round"/><rect x="2.3" y="0" width="6.6" height="1.25" rx="0.5" fill="#777"/></g>
<g transform="translate(293,617.9) scale(1)" ><path d="M2.3,1.3 H15.4 L19.4,5.1 V19.5 H2.3 Z" fill="url(#dg)"/><path d="M2.75,12 V19.4" stroke="#c4c4c4" stroke-width="1.1" fill="none"/><path d="M9,1.75 H15.3" stroke="#c8c8c8" stroke-width="0.9" fill="none"/><path d="M15.3,1.4 L19.3,5.2 H15.3 Z" fill="#d2d2d2"/><path d="M14.9,5.3 H19.35 V19.45 H2.9" fill="none" stroke="#000" stroke-width="1.15"/><g stroke="#c3c3c3" stroke-width="0.8"><line x1="9" y1="5.7" x2="12.5" y2="5.7"/><line x1="11.2" y1="8.3" x2="15.9" y2="8.3"/><line x1="13" y1="10.7" x2="15.9" y2="10.7"/><line x1="11.2" y1="13.1" x2="15.9" y2="13.1"/><line x1="5.3" y1="15.7" x2="15.9" y2="15.7"/></g><path d="M4.25,1 H6.95 V6.3 L10.3,10.4 Q10.9,11.9 9.3,11.95 H1.9 Q0.3,11.9 0.9,10.4 L4.25,6.3 Z" fill="#f0c27f" stroke="#747474" stroke-width="1" stroke-linejoin="round"/><rect x="2.3" y="0" width="6.6" height="1.25" rx="0.5" fill="#777"/></g>
<g transform="translate(293,657.9) scale(1)" ><path d="M2.3,1.3 H15.4 L19.4,5.1 V19.5 H2.3 Z" fill="url(#dg)"/><path d="M2.75,12 V19.4" stroke="#c4c4c4" stroke-width="1.1" fill="none"/><path d="M9,1.75 H15.3" stroke="#c8c8c8" stroke-width="0.9" fill="none"/><path d="M15.3,1.4 L19.3,5.2 H15.3 Z" fill="#d2d2d2"/><path d="M14.9,5.3 H19.35 V19.45 H2.9" fill="none" stroke="#000" stroke-width="1.15"/><g stroke="#c3c3c3" stroke-width="0.8"><line x1="9" y1="5.7" x2="12.5" y2="5.7"/><line x1="11.2" y1="8.3" x2="15.9" y2="8.3"/><line x1="13" y1="10.7" x2="15.9" y2="10.7"/><line x1="11.2" y1="13.1" x2="15.9" y2="13.1"/><line x1="5.3" y1="15.7" x2="15.9" y2="15.7"/></g><path d="M4.25,1 H6.95 V6.3 L10.3,10.4 Q10.9,11.9 9.3,11.95 H1.9 Q0.3,11.9 0.9,10.4 L4.25,6.3 Z" fill="#f0c27f" stroke="#747474" stroke-width="1" stroke-linejoin="round"/><rect x="2.3" y="0" width="6.6" height="1.25" rx="0.5" fill="#777"/></g>
<g transform="translate(293,697.9) scale(1)" ><path d="M2.3,1.3 H15.4 L19.4,5.1 V19.5 H2.3 Z" fill="url(#dg)"/><path d="M2.75,12 V19.4" stroke="#c4c4c4" stroke-width="1.1" fill="none"/><path d="M9,1.75 H15.3" stroke="#c8c8c8" stroke-width="0.9" fill="none"/><path d="M15.3,1.4 L19.3,5.2 H15.3 Z" fill="#d2d2d2"/><path d="M14.9,5.3 H19.35 V19.45 H2.9" fill="none" stroke="#000" stroke-width="1.15"/><g stroke="#c3c3c3" stroke-width="0.8"><line x1="9" y1="5.7" x2="12.5" y2="5.7"/><line x1="11.2" y1="8.3" x2="15.9" y2="8.3"/><line x1="13" y1="10.7" x2="15.9" y2="10.7"/><line x1="11.2" y1="13.1" x2="15.9" y2="13.1"/><line x1="5.3" y1="15.7" x2="15.9" y2="15.7"/></g><path d="M4.25,1 H6.95 V6.3 L10.3,10.4 Q10.9,11.9 9.3,11.95 H1.9 Q0.3,11.9 0.9,10.4 L4.25,6.3 Z" fill="#f0c27f" stroke="#747474" stroke-width="1" stroke-linejoin="round"/><rect x="2.3" y="0" width="6.6" height="1.25" rx="0.5" fill="#777"/></g>
<g transform="translate(293,737.9) scale(1)" ><path d="M2.3,1.3 H15.4 L19.4,5.1 V19.5 H2.3 Z" fill="url(#dg)"/><path d="M2.75,12 V19.4" stroke="#c4c4c4" stroke-width="1.1" fill="none"/><path d="M9,1.75 H15.3" stroke="#c8c8c8" stroke-width="0.9" fill="none"/><path d="M15.3,1.4 L19.3,5.2 H15.3 Z" fill="#d2d2d2"/><path d="M14.9,5.3 H19.35 V19.45 H2.9" fill="none" stroke="#000" stroke-width="1.15"/><g stroke="#c3c3c3" stroke-width="0.8"><line x1="9" y1="5.7" x2="12.5" y2="5.7"/><line x1="11.2" y1="8.3" x2="15.9" y2="8.3"/><line x1="13" y1="10.7" x2="15.9" y2="10.7"/><line x1="11.2" y1="13.1" x2="15.9" y2="13.1"/><line x1="5.3" y1="15.7" x2="15.9" y2="15.7"/></g><path d="M4.25,1 H6.95 V6.3 L10.3,10.4 Q10.9,11.9 9.3,11.95 H1.9 Q0.3,11.9 0.9,10.4 L4.25,6.3 Z" fill="#f0c27f" stroke="#747474" stroke-width="1" stroke-linejoin="round"/><rect x="2.3" y="0" width="6.6" height="1.25" rx="0.5" fill="#777"/></g>
<g transform="translate(293,777.9) scale(1)" ><path d="M2.3,1.3 H15.4 L19.4,5.1 V19.5 H2.3 Z" fill="url(#dg)"/><path d="M2.75,12 V19.4" stroke="#c4c4c4" stroke-width="1.1" fill="none"/><path d="M9,1.75 H15.3" stroke="#c8c8c8" stroke-width="0.9" fill="none"/><path d="M15.3,1.4 L19.3,5.2 H15.3 Z" fill="#d2d2d2"/><path d="M14.9,5.3 H19.35 V19.45 H2.9" fill="none" stroke="#000" stroke-width="1.15"/><g stroke="#c3c3c3" stroke-width="0.8"><line x1="9" y1="5.7" x2="12.5" y2="5.7"/><line x1="11.2" y1="8.3" x2="15.9" y2="8.3"/><line x1="13" y1="10.7" x2="15.9" y2="10.7"/><line x1="11.2" y1="13.1" x2="15.9" y2="13.1"/><line x1="5.3" y1="15.7" x2="15.9" y2="15.7"/></g><path d="M4.25,1 H6.95 V6.3 L10.3,10.4 Q10.9,11.9 9.3,11.95 H1.9 Q0.3,11.9 0.9,10.4 L4.25,6.3 Z" fill="#f0c27f" stroke="#747474" stroke-width="1" stroke-linejoin="round"/><rect x="2.3" y="0" width="6.6" height="1.25" rx="0.5" fill="#777"/></g>
<g transform="translate(293,817.9) scale(1)" ><path d="M2.3,1.3 H15.4 L19.4,5.1 V19.5 H2.3 Z" fill="url(#dg)"/><path d="M2.75,12 V19.4" stroke="#c4c4c4" stroke-width="1.1" fill="none"/><path d="M9,1.75 H15.3" stroke="#c8c8c8" stroke-width="0.9" fill="none"/><path d="M15.3,1.4 L19.3,5.2 H15.3 Z" fill="#d2d2d2"/><path d="M14.9,5.3 H19.35 V19.45 H2.9" fill="none" stroke="#000" stroke-width="1.15"/><g stroke="#c3c3c3" stroke-width="0.8"><line x1="9" y1="5.7" x2="12.5" y2="5.7"/><line x1="11.2" y1="8.3" x2="15.9" y2="8.3"/><line x1="13" y1="10.7" x2="15.9" y2="10.7"/><line x1="11.2" y1="13.1" x2="15.9" y2="13.1"/><line x1="5.3" y1="15.7" x2="15.9" y2="15.7"/></g><path d="M4.25,1 H6.95 V6.3 L10.3,10.4 Q10.9,11.9 9.3,11.95 H1.9 Q0.3,11.9 0.9,10.4 L4.25,6.3 Z" fill="#f0c27f" stroke="#747474" stroke-width="1" stroke-linejoin="round"/><rect x="2.3" y="0" width="6.6" height="1.25" rx="0.5" fill="#777"/></g>
<g transform="translate(293,857.9) scale(1)" ><path d="M2.3,1.3 H15.4 L19.4,5.1 V19.5 H2.3 Z" fill="url(#dg)"/><path d="M2.75,12 V19.4" stroke="#c4c4c4" stroke-width="1.1" fill="none"/><path d="M9,1.75 H15.3" stroke="#c8c8c8" stroke-width="0.9" fill="none"/><path d="M15.3,1.4 L19.3,5.2 H15.3 Z" fill="#d2d2d2"/><path d="M14.9,5.3 H19.35 V19.45 H2.9" fill="none" stroke="#000" stroke-width="1.15"/><g stroke="#c3c3c3" stroke-width="0.8"><line x1="9" y1="5.7" x2="12.5" y2="5.7"/><line x1="11.2" y1="8.3" x2="15.9" y2="8.3"/><line x1="13" y1="10.7" x2="15.9" y2="10.7"/><line x1="11.2" y1="13.1" x2="15.9" y2="13.1"/><line x1="5.3" y1="15.7" x2="15.9" y2="15.7"/></g><path d="M4.25,1 H6.95 V6.3 L10.3,10.4 Q10.9,11.9 9.3,11.95 H1.9 Q0.3,11.9 0.9,10.4 L4.25,6.3 Z" fill="#f0c27f" stroke="#747474" stroke-width="1" stroke-linejoin="round"/><rect x="2.3" y="0" width="6.6" height="1.25" rx="0.5" fill="#777"/></g>
<path d="M111.00,726.10 A80.5,80.5 0 0 1 127.74,885.34 L121.25,854.82 A49.3,49.3 0 0 0 111.00,757.30 Z" fill="#e0e0e0" stroke="#fff" stroke-width="1"/>
<path d="M127.74,885.34 A80.5,80.5 0 0 1 34.44,781.72 L64.11,791.37 A49.3,49.3 0 0 0 121.25,854.82 Z" fill="#7eff7a" stroke="#fff" stroke-width="1"/>
<path d="M34.44,781.72 A80.5,80.5 0 0 1 78.26,733.06 L90.95,761.56 A49.3,49.3 0 0 0 64.11,791.37 Z" fill="#f47457" stroke="#fff" stroke-width="1"/>
<path d="M78.26,733.06 A80.5,80.5 0 0 1 111.00,726.10 L111.00,757.30 A49.3,49.3 0 0 0 90.95,761.56 Z" fill="#f4f356" stroke="#fff" stroke-width="1"/>
<text x="160.5" y="805.5" text-anchor="middle" font-family="Liberation Sans" font-size="15" fill="#222">7</text>
<text x="73.5" y="844.5" text-anchor="middle" font-family="Liberation Sans" font-size="15" fill="#222">5</text>
<text x="73.5" y="777.5" text-anchor="middle" font-family="Liberation Sans" font-size="15" fill="#222">2</text>
<text x="100.75" y="762.3" text-anchor="middle" font-family="Liberation Sans" font-size="15" fill="#222">1</text>
<rect x="1143.20" y="112.3" width="7" height="1.5" fill="#555"/>
<rect x="1151.70" y="112.3" width="7" height="1.5" fill="#555"/>
<rect x="1328.80" y="112.3" width="7" height="1.5" fill="#555"/>
<rect x="1337.30" y="112.3" width="7" height="1.5" fill="#555"/>
<rect x="1602.75" y="163.6" width="7" height="1.5" fill="#555"/>
<rect x="1611.35" y="163.6" width="7" height="1.5" fill="#555"/>
<rect x="1619.95" y="163.6" width="7" height="1.5" fill="#555"/>
<rect x="1736.00" y="163.6" width="7" height="1.5" fill="#555"/>
<rect x="240" y="226.8" width="1499" height="1.4" fill="#fbb82a"/>
<rect x="720.00" y="249.25" width="6" height="1.3" fill="#555"/>
<rect x="727.30" y="249.25" width="6" height="1.3" fill="#555"/>
<rect x="772.70" y="249.25" width="6" height="1.3" fill="#555"/>
<rect x="780.00" y="249.25" width="6" height="1.3" fill="#555"/>
<rect x="865.00" y="249.25" width="6" height="1.3" fill="#555"/>
<rect x="872.30" y="249.25" width="6" height="1.3" fill="#555"/>
<rect x="917.70" y="249.25" width="6" height="1.3" fill="#555"/>
<rect x="925.00" y="249.25" width="6" height="1.3" fill="#555"/>
<rect x="1235.00" y="249.25" width="6" height="1.3" fill="#555"/>
<rect x="1242.30" y="249.25" width="6" height="1.3" fill="#555"/>
<rect x="1287.70" y="249.25" width="6" height="1.3" fill="#555"/>
<rect x="1295.00" y="249.25" width="6" height="1.3" fill="#555"/>
<rect x="1383.00" y="249.25" width="6" height="1.3" fill="#555"/>
<rect x="1390.30" y="249.25" width="6" height="1.3" fill="#555"/>
<rect x="1435.70" y="249.25" width="6" height="1.3" fill="#555"/>
<rect x="1443.00" y="249.25" width="6" height="1.3" fill="#555"/>
<rect x="1543.00" y="249.25" width="6" height="1.3" fill="#555"/>
<rect x="1550.30" y="249.25" width="6" height="1.3" fill="#555"/>
<rect x="1595.70" y="249.25" width="6" height="1.3" fill="#555"/>
<rect x="1603.00" y="249.25" width="6" height="1.3" fill="#555"/></svg>
<span class="t" style="left:120.00px;top:16px;font-size:16.8px;letter-spacing:0.480px;word-spacing:1.68px;color:#fdc571;">Library Information System</span>
<span class="t" style="left:402.00px;top:16px;font-size:16.8px;letter-spacing:0.100px;word-spacing:1.68px;color:#999;">Search</span>
<span class="t" style="left:782.75px;top:16px;font-size:16.8px;letter-spacing:0.571px;word-spacing:1.68px;color:#fdc571;">Planning</span>
<span class="t" style="left:909.00px;top:16px;font-size:16.8px;letter-spacing:0.583px;word-spacing:1.68px;color:#eee8d5;">Testing</span>
<span class="t" style="left:1022.00px;top:16px;font-size:16.8px;letter-spacing:0.071px;word-spacing:1.68px;color:#fdc571;">Tracking</span>
<span class="t" style="left:1141.50px;top:16px;font-size:16.8px;letter-spacing:0.562px;word-spacing:1.68px;color:#fdc571;">Reporting</span>
<span class="t" style="left:1695.50px;top:14px;font-size:16.8px;letter-spacing:0.158px;word-spacing:1.68px;color:#fdc571;">System Administrator</span>
<span class="t" style="left:19.50px;top:59px;font-size:16.2px;letter-spacing:0.000px;word-spacing:1.62px;color:#eee8d5;">Test Cases</span>
<span class="t" style="left:120.00px;top:59px;font-size:16.2px;letter-spacing:0.000px;word-spacing:1.62px;color:#93a1a1;">/</span>
<span class="t" style="left:142.50px;top:59px;font-size:16.2px;letter-spacing:0.312px;word-spacing:1.62px;color:#fdc571;">Test Sets</span>
<span class="t" style="left:231.50px;top:59px;font-size:16.2px;letter-spacing:0.000px;word-spacing:1.62px;color:#93a1a1;">/</span>
<span class="t" style="left:254.50px;top:59px;font-size:16.2px;letter-spacing:0.312px;word-spacing:1.62px;color:#fdc571;">Test Runs</span>
<span class="t" style="left:348.50px;top:59px;font-size:16.2px;letter-spacing:0.000px;word-spacing:1.62px;color:#93a1a1;">/</span>
<span class="t" style="left:371.75px;top:59px;font-size:16.2px;letter-spacing:0.833px;word-spacing:1.62px;color:#fdc571;">Automation Hosts</span>
<span class="t" style="left:531.50px;top:59px;font-size:16.2px;letter-spacing:0.000px;word-spacing:1.62px;color:#93a1a1;">/</span>
<span class="t" style="left:553.25px;top:59px;font-size:16.2px;letter-spacing:0.538px;word-spacing:1.62px;color:#fdc571;">Configurations</span>
<span class="t" style="left:1727.20px;top:59px;font-size:16.2px;letter-spacing:0.000px;word-spacing:1.62px;color:#3b3b3b;">Release</span>
<span class="t" style="left:19.00px;top:91px;font-size:16.5px;letter-spacing:0.042px;word-spacing:1.65px;color:#666;">Folders</span>
<span class="t" style="left:19.00px;top:371px;font-size:16.5px;letter-spacing:0.614px;word-spacing:1.65px;color:#666;">Quick Filter</span>
<span class="t" style="left:19.00px;top:663px;font-size:16.5px;letter-spacing:0.500px;word-spacing:1.65px;color:#666;">Charts</span>
<span class="t" style="left:70.25px;top:150px;font-size:16.5px;letter-spacing:-0.333px;word-spacing:1.65px;font-weight:700;color:#000;">Root</span>
<span class="t" style="left:85.25px;top:178px;font-size:16.5px;letter-spacing:0.409px;word-spacing:1.65px;color:#111;">Common Tests</span>
<span class="t" style="left:85.25px;top:207px;font-size:16.5px;letter-spacing:0.487px;word-spacing:1.65px;color:#111;max-width:115px;overflow:hidden;">Functional Tests</span>
<span class="t" style="left:85.25px;top:236px;font-size:16.5px;letter-spacing:0.167px;word-spacing:1.65px;color:#111;max-width:115px;overflow:hidden;">Regression Tests</span>
<span class="t" style="left:85.25px;top:265px;font-size:16.5px;letter-spacing:0.438px;word-spacing:1.65px;color:#111;">Scenario Tests</span>
<span class="t" style="left:52.25px;top:310px;font-size:16.5px;letter-spacing:1.000px;word-spacing:1.65px;color:#333;">Edit</span>
<span class="t" style="left:121.75px;top:310px;font-size:16.5px;letter-spacing:0.500px;word-spacing:1.65px;color:#333;">Add</span>
<span class="t" style="left:21.50px;top:424px;font-size:16.3px;letter-spacing:0.571px;word-spacing:1.63px;color:#444;">(No filters available)</span>
<span class="t" style="left:20.15px;top:480px;font-size:23px;letter-spacing:0.000px;word-spacing:2.3px;color:#111;-webkit-text-stroke:0.6px #fff;transform:scaleX(0.8527);transform-origin:0 0;">Components</span>
<span class="t" style="left:49.50px;top:522px;font-size:16.3px;letter-spacing:1.077px;word-spacing:1.63px;color:#444;">Administration</span>
<span class="t" style="left:49.50px;top:555px;font-size:16.3px;letter-spacing:0.328px;word-spacing:1.63px;color:#444;">Author Managem...</span>
<span class="t" style="left:48.00px;top:588px;font-size:16.3px;letter-spacing:0.696px;word-spacing:1.63px;color:#444;">Book Management</span>
<span class="t" style="left:278.50px;top:99px;font-size:16px;letter-spacing:0.479px;word-spacing:1.6px;color:#333;">New Test Case</span>
<span class="t" style="left:439.50px;top:99px;font-size:16px;letter-spacing:0.550px;word-spacing:1.6px;color:#333;">Delete</span>
<span class="t" style="left:542.25px;top:99px;font-size:16px;letter-spacing:0.542px;word-spacing:1.6px;color:#333;">Refresh</span>
<span class="t" style="left:658.25px;top:99px;font-size:16px;letter-spacing:0.500px;word-spacing:1.6px;color:#333;">Focus On</span>
<span class="t" style="left:784.00px;top:99px;font-size:16px;letter-spacing:0.850px;word-spacing:1.6px;color:#333;">Filter</span>
<span class="t" style="left:919.50px;top:99px;font-size:16px;letter-spacing:1.000px;word-spacing:1.6px;color:#333;">Edit</span>
<span class="t" style="left:1037.00px;top:99px;font-size:16px;letter-spacing:0.562px;word-spacing:1.6px;color:#333;">Tools</span>
<span class="t" style="left:1165.50px;top:99px;font-size:16px;letter-spacing:0.950px;word-spacing:1.6px;color:#555;">Show/hide columns</span>
<span class="t" style="left:984.60px;top:150px;font-size:13px;letter-spacing:0.792px;word-spacing:1.3px;color:#333;">Clear Filters</span>
<span class="t" style="left:1635.25px;top:149px;font-size:16.5px;letter-spacing:0.000px;word-spacing:1.65px;color:#555;">All Releases</span>
<span class="t" style="left:248.50px;top:148px;font-size:16px;letter-spacing:0.944px;word-spacing:1.6px;color:#333;">Displaying</span>
<span class="t" style="left:336.40px;top:148px;font-size:16px;letter-spacing:-1.180px;word-spacing:1.6px;color:#222;-webkit-text-stroke:0.4px #222;">1 – 15</span>
<span class="t" style="left:384.00px;top:148px;font-size:16px;letter-spacing:1.300px;word-spacing:1.6px;color:#333;">out of</span>
<span class="t" style="left:439.70px;top:148px;font-size:16px;letter-spacing:-1.300px;word-spacing:1.6px;color:#222;-webkit-text-stroke:0.4px #222;">15</span>
<span class="t" style="left:461.70px;top:148px;font-size:16px;letter-spacing:0.562px;word-spacing:1.6px;color:#333;">test case(s) for this release.</span>
<span class="t" style="left:704.75px;top:148px;font-size:13px;letter-spacing:0.333px;word-spacing:1.3px;font-weight:700;color:#333;">Root</span>
<span class="t" style="left:760.75px;top:148px;font-size:16px;letter-spacing:0.750px;word-spacing:1.6px;color:#333;">Filtering results by Name.</span>
<span class="t" style="left:292.00px;top:195px;font-size:14.5px;letter-spacing:1.500px;word-spacing:1.45px;color:#222;-webkit-text-stroke:0.4px #222;">Name</span>
<span class="t" style="left:712.00px;top:192px;font-size:14.5px;letter-spacing:0.900px;word-spacing:1.45px;color:#222;-webkit-text-stroke:0.4px #222;">Execution Status</span>
<span class="t" style="left:857.00px;top:195px;font-size:14.5px;letter-spacing:0.750px;word-spacing:1.45px;color:#222;-webkit-text-stroke:0.4px #222;">Owner</span>
<span class="t" style="left:1052.25px;top:195px;font-size:14.5px;letter-spacing:0.917px;word-spacing:1.45px;color:#222;-webkit-text-stroke:0.4px #222;">Last Executed</span>
<span class="t" style="left:1228.75px;top:195px;font-size:14.5px;letter-spacing:1.300px;word-spacing:1.45px;color:#222;-webkit-text-stroke:0.4px #222;">Author</span>
<span class="t" style="left:1375.50px;top:195px;font-size:14.5px;letter-spacing:0.800px;word-spacing:1.45px;color:#222;-webkit-text-stroke:0.4px #222;">Status</span>
<span class="t" style="left:1536.50px;top:195px;font-size:14.5px;letter-spacing:0.667px;word-spacing:1.45px;color:#222;-webkit-text-stroke:0.4px #222;">Type</span>
<span class="t" style="left:1683.00px;top:195px;font-size:14.5px;letter-spacing:1.000px;word-spacing:1.45px;color:#222;-webkit-text-stroke:0.4px #222;">ID</span>
<span class="t" style="left:740.50px;top:234px;font-size:13px;letter-spacing:1.250px;word-spacing:1.3px;color:#555;">Any</span>
<span class="t" style="left:885.50px;top:234px;font-size:13px;letter-spacing:1.250px;word-spacing:1.3px;color:#555;">Any</span>
<span class="t" style="left:1255.50px;top:234px;font-size:13px;letter-spacing:1.250px;word-spacing:1.3px;color:#555;">Any</span>
<span class="t" style="left:1403.50px;top:234px;font-size:13px;letter-spacing:1.250px;word-spacing:1.3px;color:#555;">Any</span>
<span class="t" style="left:1563.50px;top:234px;font-size:13px;letter-spacing:1.250px;word-spacing:1.3px;color:#555;">Any</span>
<span class="t" style="left:1684.00px;top:231px;font-size:15px;letter-spacing:-1.300px;word-spacing:1.5px;color:#222;-webkit-text-stroke:0.4px #222;">TC</span>
<span class="t" style="left:317.60px;top:269px;font-size:15px;letter-spacing:0.582px;word-spacing:1.5px;color:#6b6b6b;text-decoration:underline;text-underline-offset:1px;text-decoration-thickness:1px;">Common Tests</span>
<span class="t" style="left:440.50px;top:269px;font-size:13px;letter-spacing:0.000px;word-spacing:1.3px;font-weight:700;color:#333;">4</span>
<span class="t" style="left:1052.00px;top:269px;font-size:15.5px;letter-spacing:1.200px;word-spacing:1.55px;color:#333;">30-Nov-2003</span>
<span class="t" style="left:317.60px;top:304px;font-size:15px;letter-spacing:0.627px;word-spacing:1.5px;color:#6b6b6b;text-decoration:underline;text-underline-offset:1px;text-decoration-thickness:1px;">Functional Tests</span>
<span class="t" style="left:450.50px;top:305px;font-size:13px;letter-spacing:0.000px;word-spacing:1.3px;font-weight:700;color:#333;">5</span>
<span class="t" style="left:1052.00px;top:304px;font-size:15.5px;letter-spacing:1.200px;word-spacing:1.55px;color:#333;">30-Nov-2003</span>
<span class="t" style="left:317.60px;top:340px;font-size:15px;letter-spacing:0.360px;word-spacing:1.5px;color:#6b6b6b;text-decoration:underline;text-underline-offset:1px;text-decoration-thickness:1px;">Regression Tests</span>
<span class="t" style="left:454.50px;top:341px;font-size:13px;letter-spacing:0.000px;word-spacing:1.3px;font-weight:700;color:#333;">2</span>
<span class="t" style="left:1052.00px;top:340px;font-size:15.5px;letter-spacing:1.200px;word-spacing:1.55px;color:#333;">30-Nov-2003</span>
<span class="t" style="left:317.60px;top:376px;font-size:15px;letter-spacing:0.569px;word-spacing:1.5px;color:#6b6b6b;text-decoration:underline;text-underline-offset:1px;text-decoration-thickness:1px;">Scenario Tests</span>
<span class="t" style="left:439.50px;top:376px;font-size:13px;letter-spacing:0.000px;word-spacing:1.3px;font-weight:700;color:#333;">4</span>
<span class="t" style="left:320.50px;top:414px;font-size:15px;letter-spacing:0.815px;word-spacing:1.5px;color:#6b6b6b;text-decoration:underline;text-underline-offset:1px;text-decoration-thickness:1px;">Ability to create new author</span>
<span class="t" style="left:712.70px;top:414px;font-size:15px;letter-spacing:0.500px;word-spacing:1.5px;color:#333;">Failed</span>
<span class="t" style="left:858.00px;top:414px;font-size:15px;letter-spacing:0.600px;word-spacing:1.5px;color:#333;">Joe P Smith</span>
<span class="t" style="left:1052.00px;top:414px;font-size:15.5px;letter-spacing:1.200px;word-spacing:1.55px;color:#333;">30-Nov-2003</span>
<span class="t" style="left:1227.00px;top:414px;font-size:15px;letter-spacing:0.250px;word-spacing:1.5px;color:#333;">Fred Bloggs</span>
<span class="t" style="left:1375.00px;top:414px;font-size:15px;letter-spacing:0.615px;word-spacing:1.5px;color:#333;">Ready for Test</span>
<span class="t" style="left:1535.00px;top:414px;font-size:15px;letter-spacing:0.889px;word-spacing:1.5px;color:#333;">Functional</span>
<span class="t" style="left:1684.00px;top:414px;font-size:15px;letter-spacing:-1.000px;word-spacing:1.5px;color:#333;">TC:4</span>
<span class="t" style="left:320.50px;top:454px;font-size:15px;letter-spacing:0.760px;word-spacing:1.5px;color:#6b6b6b;text-decoration:underline;text-underline-offset:1px;text-decoration-thickness:1px;">Ability to create new book</span>
<span class="t" style="left:712.70px;top:454px;font-size:15px;letter-spacing:0.200px;word-spacing:1.5px;color:#333;">Passed</span>
<span class="t" style="left:857.00px;top:454px;font-size:15px;letter-spacing:0.300px;word-spacing:1.5px;color:#333;">Fred Bloggs</span>
<span class="t" style="left:1052.00px;top:454px;font-size:15.5px;letter-spacing:1.200px;word-spacing:1.55px;color:#333;">30-Nov-2003</span>
<span class="t" style="left:1227.00px;top:454px;font-size:15px;letter-spacing:0.250px;word-spacing:1.5px;color:#333;">Fred Bloggs</span>
<span class="t" style="left:1375.00px;top:454px;font-size:15px;letter-spacing:0.615px;word-spacing:1.5px;color:#333;">Ready for Test</span>
<span class="t" style="left:1535.00px;top:454px;font-size:15px;letter-spacing:0.889px;word-spacing:1.5px;color:#333;">Functional</span>
<span class="t" style="left:1684.00px;top:454px;font-size:15px;letter-spacing:-1.000px;word-spacing:1.5px;color:#333;">TC:2</span>
<span class="t" style="left:320.50px;top:494px;font-size:15px;letter-spacing:0.900px;word-spacing:1.5px;color:#6b6b6b;text-decoration:underline;text-underline-offset:1px;text-decoration-thickness:1px;">Ability to edit existing author</span>
<span class="t" style="left:712.70px;top:494px;font-size:15px;letter-spacing:0.500px;word-spacing:1.5px;color:#333;">Blocked</span>
<span class="t" style="left:858.00px;top:494px;font-size:15px;letter-spacing:0.600px;word-spacing:1.5px;color:#333;">Joe P Smith</span>
<span class="t" style="left:1052.00px;top:494px;font-size:15.5px;letter-spacing:1.200px;word-spacing:1.55px;color:#333;">30-Nov-2003</span>
<span class="t" style="left:1227.00px;top:494px;font-size:15px;letter-spacing:0.250px;word-spacing:1.5px;color:#333;">Fred Bloggs</span>
<span class="t" style="left:1375.00px;top:494px;font-size:15px;letter-spacing:0.615px;word-spacing:1.5px;color:#333;">Ready for Test</span>
<span class="t" style="left:1535.00px;top:494px;font-size:15px;letter-spacing:0.889px;word-spacing:1.5px;color:#333;">Functional</span>
<span class="t" style="left:1684.00px;top:494px;font-size:15px;letter-spacing:-1.000px;word-spacing:1.5px;color:#333;">TC:5</span>
<span class="t" style="left:320.50px;top:534px;font-size:15px;letter-spacing:0.857px;word-spacing:1.5px;color:#6b6b6b;text-decoration:underline;text-underline-offset:1px;text-decoration-thickness:1px;">Ability to edit existing book</span>
<span class="t" style="left:712.70px;top:534px;font-size:15px;letter-spacing:0.500px;word-spacing:1.5px;color:#333;">Failed</span>
<span class="t" style="left:857.00px;top:534px;font-size:15px;letter-spacing:0.842px;word-spacing:1.5px;color:#333;">System Administrator</span>
<span class="t" style="left:1053.00px;top:534px;font-size:15.5px;letter-spacing:0.889px;word-spacing:1.55px;color:#333;">4-Dec-2003</span>
<span class="t" style="left:1227.00px;top:534px;font-size:15px;letter-spacing:0.250px;word-spacing:1.5px;color:#333;">Fred Bloggs</span>
<span class="t" style="left:1375.00px;top:534px;font-size:15px;letter-spacing:0.615px;word-spacing:1.5px;color:#333;">Ready for Test</span>
<span class="t" style="left:1535.00px;top:534px;font-size:15px;letter-spacing:0.600px;word-spacing:1.5px;color:#333;">Exploratory</span>
<span class="t" style="left:1684.00px;top:534px;font-size:15px;letter-spacing:-1.000px;word-spacing:1.5px;color:#333;">TC:3</span>
<span class="t" style="left:320.50px;top:573px;font-size:15px;letter-spacing:0.791px;word-spacing:1.5px;color:#6b6b6b;text-decoration:underline;text-underline-offset:1px;text-decoration-thickness:1px;">Ability to reassign book to different author</span>
<span class="t" style="left:712.70px;top:573px;font-size:15px;letter-spacing:0.200px;word-spacing:1.5px;color:#333;">Passed</span>
<span class="t" style="left:857.00px;top:573px;font-size:15px;letter-spacing:0.842px;word-spacing:1.5px;color:#333;">System Administrator</span>
<span class="t" style="left:1052.00px;top:573px;font-size:15.5px;letter-spacing:1.200px;word-spacing:1.55px;color:#333;">30-Nov-2003</span>
<span class="t" style="left:1227.00px;top:573px;font-size:15px;letter-spacing:0.250px;word-spacing:1.5px;color:#333;">Fred Bloggs</span>
<span class="t" style="left:1375.00px;top:573px;font-size:15px;letter-spacing:0.615px;word-spacing:1.5px;color:#333;">Ready for Test</span>
<span class="t" style="left:1535.00px;top:573px;font-size:15px;letter-spacing:0.889px;word-spacing:1.5px;color:#333;">Functional</span>
<span class="t" style="left:1684.00px;top:573px;font-size:15px;letter-spacing:-0.833px;word-spacing:1.5px;color:#333;">TC:6</span>
<span class="t" style="left:320.50px;top:613px;font-size:15px;letter-spacing:0.750px;word-spacing:1.5px;color:#6b6b6b;text-decoration:underline;text-underline-offset:1px;text-decoration-thickness:1px;">Adding multiple new books</span>
<span class="t" style="left:712.70px;top:613px;font-size:15px;letter-spacing:0.500px;word-spacing:1.5px;color:#333;">Not Run</span>
<span class="t" style="left:1227.00px;top:613px;font-size:15px;letter-spacing:0.250px;word-spacing:1.5px;color:#333;">Fred Bloggs</span>
<span class="t" style="left:1375.00px;top:613px;font-size:15px;letter-spacing:1.000px;word-spacing:1.5px;color:#333;">Draft</span>
<span class="t" style="left:1535.00px;top:613px;font-size:15px;letter-spacing:0.571px;word-spacing:1.5px;color:#333;">Scenario</span>
<span class="t" style="left:1684.00px;top:613px;font-size:15px;letter-spacing:-1.300px;word-spacing:1.5px;color:#333;">TC:19</span>
<span class="t" style="left:320.50px;top:653px;font-size:15px;letter-spacing:0.800px;word-spacing:1.5px;color:#6b6b6b;text-decoration:underline;text-underline-offset:1px;text-decoration-thickness:1px;">Adding new author and book</span>
<span class="t" style="left:712.70px;top:653px;font-size:15px;letter-spacing:0.500px;word-spacing:1.5px;color:#333;">Not Run</span>
<span class="t" style="left:1227.00px;top:653px;font-size:15px;letter-spacing:0.250px;word-spacing:1.5px;color:#333;">Fred Bloggs</span>
<span class="t" style="left:1375.00px;top:653px;font-size:15px;letter-spacing:1.000px;word-spacing:1.5px;color:#333;">Draft</span>
<span class="t" style="left:1535.00px;top:653px;font-size:15px;letter-spacing:0.571px;word-spacing:1.5px;color:#333;">Scenario</span>
<span class="t" style="left:1684.00px;top:653px;font-size:15px;letter-spacing:-1.250px;word-spacing:1.5px;color:#333;">TC:18</span>
<span class="t" style="left:320.50px;top:693px;font-size:15px;letter-spacing:0.764px;word-spacing:1.5px;color:#6b6b6b;text-decoration:underline;text-underline-offset:1px;text-decoration-thickness:1px;">Adding new book and author to library</span>
<span class="t" style="left:712.70px;top:693px;font-size:15px;letter-spacing:0.500px;word-spacing:1.5px;color:#333;">Not Run</span>
<span class="t" style="left:1228.00px;top:693px;font-size:15px;letter-spacing:0.600px;word-spacing:1.5px;color:#333;">Joe P Smith</span>
<span class="t" style="left:1376.00px;top:693px;font-size:15px;letter-spacing:1.000px;word-spacing:1.5px;color:#333;">Approved</span>
<span class="t" style="left:1535.00px;top:693px;font-size:15px;letter-spacing:0.571px;word-spacing:1.5px;color:#333;">Scenario</span>
<span class="t" style="left:1684.00px;top:693px;font-size:15px;letter-spacing:-1.300px;word-spacing:1.5px;color:#333;">TC:13</span>
<span class="t" style="left:320.50px;top:733px;font-size:15px;letter-spacing:0.812px;word-spacing:1.5px;color:#6b6b6b;text-decoration:underline;text-underline-offset:1px;text-decoration-thickness:1px;">Author management</span>
<span class="t" style="left:712.70px;top:733px;font-size:15px;letter-spacing:0.200px;word-spacing:1.5px;color:#333;">Passed</span>
<span class="t" style="left:1052.00px;top:733px;font-size:15.5px;letter-spacing:1.200px;word-spacing:1.55px;color:#333;">30-Nov-2003</span>
<span class="t" style="left:1228.00px;top:733px;font-size:15px;letter-spacing:0.600px;word-spacing:1.5px;color:#333;">Joe P Smith</span>
<span class="t" style="left:1375.00px;top:733px;font-size:15px;letter-spacing:0.615px;word-spacing:1.5px;color:#333;">Ready for Test</span>
<span class="t" style="left:1535.00px;top:733px;font-size:15px;letter-spacing:0.444px;word-spacing:1.5px;color:#333;">Regression</span>
<span class="t" style="left:1684.00px;top:733px;font-size:15px;letter-spacing:-1.000px;word-spacing:1.5px;color:#333;">TC:9</span>
<span class="t" style="left:319.50px;top:773px;font-size:15px;letter-spacing:0.786px;word-spacing:1.5px;color:#6b6b6b;text-decoration:underline;text-underline-offset:1px;text-decoration-thickness:1px;">Book management</span>
<span class="t" style="left:712.70px;top:773px;font-size:15px;letter-spacing:0.200px;word-spacing:1.5px;color:#333;">Passed</span>
<span class="t" style="left:1052.00px;top:773px;font-size:15.5px;letter-spacing:1.200px;word-spacing:1.55px;color:#333;">30-Nov-2003</span>
<span class="t" style="left:1228.00px;top:773px;font-size:15px;letter-spacing:0.600px;word-spacing:1.5px;color:#333;">Joe P Smith</span>
<span class="t" style="left:1375.00px;top:773px;font-size:15px;letter-spacing:0.615px;word-spacing:1.5px;color:#333;">Ready for Test</span>
<span class="t" style="left:1535.00px;top:773px;font-size:15px;letter-spacing:0.444px;word-spacing:1.5px;color:#333;">Regression</span>
<span class="t" style="left:1684.00px;top:773px;font-size:15px;letter-spacing:-1.000px;word-spacing:1.5px;color:#333;">TC:8</span>
<span class="t" style="left:319.50px;top:813px;font-size:15px;letter-spacing:0.667px;word-spacing:1.5px;color:#6b6b6b;text-decoration:underline;text-underline-offset:1px;text-decoration-thickness:1px;">Create Author</span>
<span class="t" style="left:712.70px;top:813px;font-size:15px;letter-spacing:0.500px;word-spacing:1.5px;color:#333;">Not Run</span>
<span class="t" style="left:1228.00px;top:813px;font-size:15px;letter-spacing:0.600px;word-spacing:1.5px;color:#333;">Joe P Smith</span>
<span class="t" style="left:1375.00px;top:813px;font-size:15px;letter-spacing:1.000px;word-spacing:1.5px;color:#333;">Draft</span>
<span class="t" style="left:1535.00px;top:813px;font-size:15px;letter-spacing:0.571px;word-spacing:1.5px;color:#333;">Scenario</span>
<span class="t" style="left:1684.00px;top:813px;font-size:15px;letter-spacing:-0.500px;word-spacing:1.5px;color:#333;">TC:20</span>
<span class="t" style="left:319.50px;top:853px;font-size:15px;letter-spacing:0.350px;word-spacing:1.5px;color:#6b6b6b;text-decoration:underline;text-underline-offset:1px;text-decoration-thickness:1px;">Create Book</span>
<span class="t" style="left:712.70px;top:853px;font-size:15px;letter-spacing:0.500px;word-spacing:1.5px;color:#333;">Not Run</span>
<span class="t" style="left:1228.00px;top:853px;font-size:15px;letter-spacing:0.600px;word-spacing:1.5px;color:#333;">Joe P Smith</span>
<span class="t" style="left:1375.00px;top:853px;font-size:15px;letter-spacing:1.000px;word-spacing:1.5px;color:#333;">Draft</span>
<span class="t" style="left:1535.00px;top:853px;font-size:15px;letter-spacing:0.571px;word-spacing:1.5px;color:#333;">Scenario</span>
<span class="t" style="left:1684.00px;top:853px;font-size:15px;letter-spacing:-1.000px;word-spacing:1.5px;color:#333;">TC:21</span>
</body></html>
